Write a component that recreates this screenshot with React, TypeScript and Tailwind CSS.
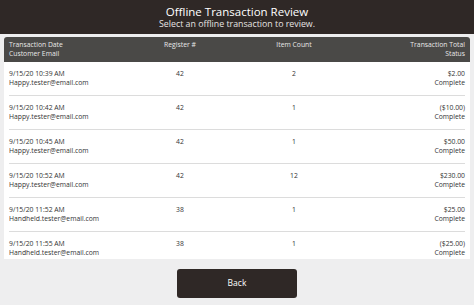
const rows = [
  { date: '9/15/20 10:39 AM', email: 'Happy.tester@email.com', register: '42', count: '2', total: '$2.00', status: 'Complete' },
  { date: '9/15/20 10:42 AM', email: 'Happy.tester@email.com', register: '42', count: '1', total: '($10.00)', status: 'Complete' },
  { date: '9/15/20 10:45 AM', email: 'Happy.tester@email.com', register: '42', count: '1', total: '$50.00', status: 'Complete' },
  { date: '9/15/20 10:52 AM', email: 'Happy.tester@email.com', register: '42', count: '12', total: '$230.00', status: 'Complete' },
  { date: '9/15/20 11:52 AM', email: 'Handheld.tester@email.com', register: '38', count: '1', total: '$25.00', status: 'Complete' },
  { date: '9/15/20 11:55 AM', email: 'Handheld.tester@email.com', register: '38', count: '1', total: '($25.00)', status: 'Complete' },
];

export default function App() {
  return (
    <div className="w-[474px] h-[305px] flex flex-col bg-[#eeeeef] font-['Open_Sans',sans-serif] overflow-hidden">
      <header className="h-[34px] shrink-0 bg-[#2f2826] text-white flex flex-col items-center justify-center">
        <h1 className="text-[11.5px] leading-[13px]">Offline Transaction Review</h1>
        <p className="text-[8.8px] leading-[12px] text-[#e6e3e2]">Select an offline transaction to review.</p>
      </header>

      <div className="mx-[4px] mt-[3px] h-[222px] bg-white rounded-t-[3px] overflow-hidden flex flex-col">
        <div className="h-[25px] shrink-0 bg-[#4a4947] text-[#e8e8e8] text-[6.8px] leading-[9px] grid grid-cols-4 px-[5px] pt-[3px]">
          <div>
            <div>Transaction Date</div>
            <div>Customer Email</div>
          </div>
          <div className="text-center">Register #</div>
          <div className="text-center">Item Count</div>
          <div className="text-right">
            <div>Transaction Total</div>
            <div>Status</div>
          </div>
        </div>
        <div className="px-[5px] text-[#333333] text-[6.8px] leading-[9px]">
          {rows.map((r, i) => (
            <div
              key={i}
              className={'grid grid-cols-4 h-[34px] pt-[7px] ' + (i < rows.length - 1 ? 'border-b border-[#dcdcdc]' : '')}
            >
              <div>
                <div>{r.date}</div>
                <div>{r.email}</div>
              </div>
              <div className="text-center">{r.register}</div>
              <div className="text-center">{r.count}</div>
              <div className="text-right">
                <div>{r.total}</div>
                <div>{r.status}</div>
              </div>
            </div>
          ))}
        </div>
      </div>

      <div className="flex-1 flex justify-center pt-[10px]">
        <button className="w-[120px] h-[29px] rounded-[3px] bg-[#2f2826] text-white text-[8.5px]">Back</button>
      </div>
    </div>
  );
}
